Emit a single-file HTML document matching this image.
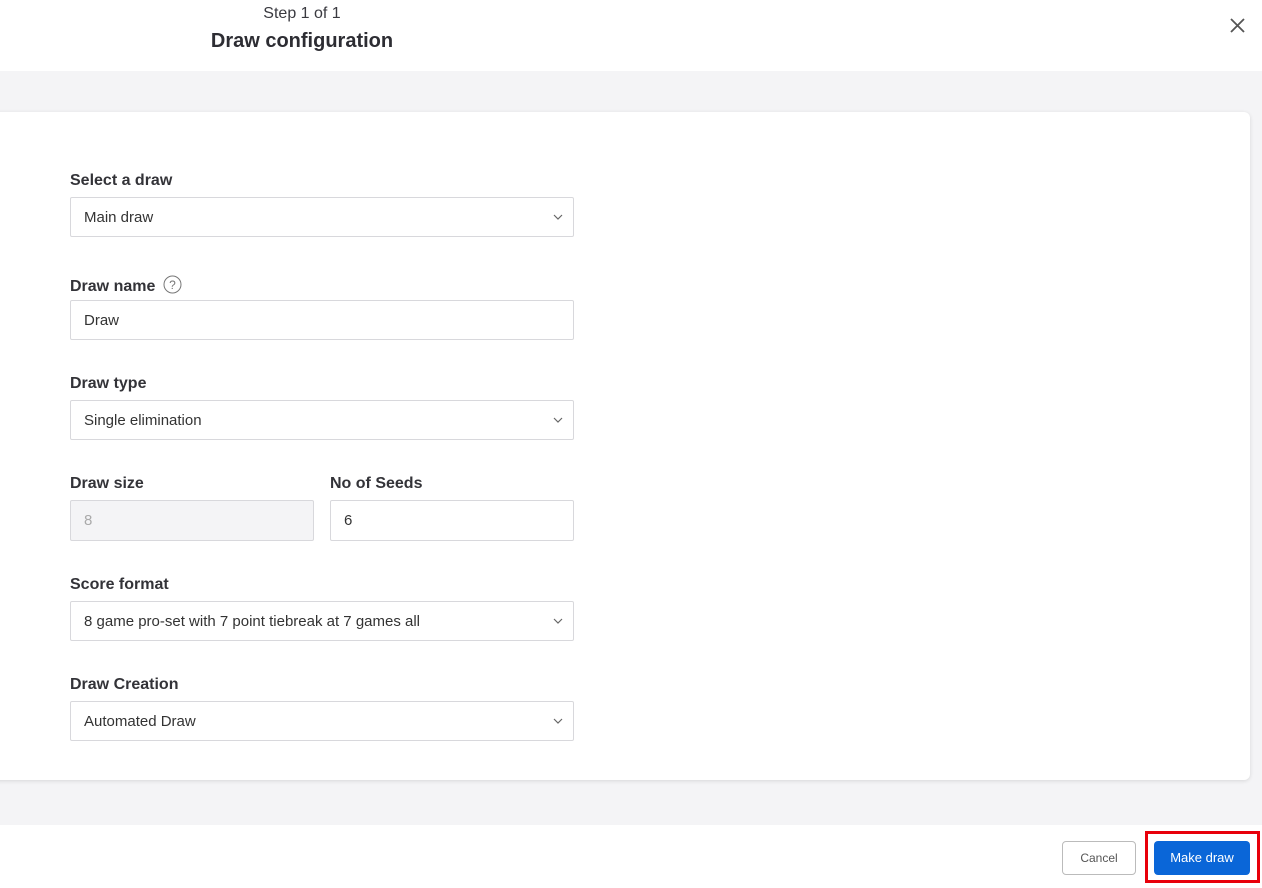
<!DOCTYPE html>
<html><head><style>
*{box-sizing:border-box;margin:0;padding:0}
body{width:1262px;height:888px;overflow:hidden;background:#f4f4f6;font-family:"Liberation Sans",sans-serif;position:relative;color:#2d2d33}
.hdr{position:absolute;left:0;top:0;width:1262px;height:71px;background:#fff}
.step{position:absolute;left:0;width:604px;top:5px;text-align:center;font-size:16px;color:#3a3a40}
.title{position:absolute;left:0;width:604px;top:30px;text-align:center;font-size:20px;font-weight:bold;color:#2d2d33}
.card{position:absolute;left:-10px;top:112px;width:1260px;height:668px;background:#fff;border-radius:6px;box-shadow:0 1px 4px rgba(0,0,0,.12)}
.lbl{position:absolute;font-size:16px;font-weight:bold;color:#333338}
.box{position:absolute;height:40px;border:1px solid #d8d8dc;border-radius:2px;background:#fff;font-size:15px;padding-left:13px;line-height:40px;color:#333}
.chev{position:absolute;right:10px;top:15px}
.ftr{position:absolute;left:0;top:825px;width:1262px;height:63px;background:#fff}
.cancel{position:absolute;left:1062px;top:841px;width:74px;height:34px;border:1px solid #bbb;border-radius:4px;font-size:12px;color:#555;text-align:center;line-height:32px;background:#fff}
.make{position:absolute;left:1154px;top:841px;width:96px;height:34px;border-radius:4px;background:#0a66d8;color:#fff;font-size:13px;text-align:center;line-height:34px}
.red{position:absolute;left:1145px;top:831px;width:115px;height:52px;border:3px solid #e8000b}
</style></head><body>
<div class="hdr"><div class="step">Step 1 of 1</div><div class="title">Draw configuration</div>
<svg style="position:absolute;left:1230px;top:18px" width="15" height="15" viewBox="0 0 15 15"><path d="M1 1L14 14M14 1L1 14" stroke="#555" stroke-width="1.8"/></svg></div>
<div class="card"></div>
<div class="lbl" style="left:70px;top:172px">Select a draw</div>
<div class="box" style="left:70px;top:197px;width:504px">Main draw<svg class="chev" width="10" height="8" viewBox="0 0 10 8"><path d="M1 2l4 4 4-4" stroke="#666" fill="none" stroke-width="1.2"/></svg></div>
<div class="lbl" style="left:70px;top:275px">Draw name <svg style="vertical-align:-3px;margin-left:3px" width="19" height="19" viewBox="0 0 19 19"><circle cx="9.5" cy="9.5" r="8.5" fill="none" stroke="#777" stroke-width="1"/><text x="9.5" y="14" font-size="12" text-anchor="middle" fill="#777" font-family="Liberation Sans" font-weight="normal">?</text></svg></div>
<div class="box" style="left:70px;top:300px;width:504px">Draw</div>
<div class="lbl" style="left:70px;top:375px">Draw type</div>
<div class="box" style="left:70px;top:400px;width:504px">Single elimination<svg class="chev" width="10" height="8" viewBox="0 0 10 8"><path d="M1 2l4 4 4-4" stroke="#666" fill="none" stroke-width="1.2"/></svg></div>
<div class="lbl" style="left:70px;top:475px">Draw size</div>
<div class="box" style="left:70px;top:500px;width:244px;height:41px;background:#f4f4f6;color:#aaa">8</div>
<div class="lbl" style="left:330px;top:475px">No of Seeds</div>
<div class="box" style="left:330px;top:500px;width:244px;height:41px">6</div>
<div class="lbl" style="left:70px;top:576px">Score format</div>
<div class="box" style="left:70px;top:601px;width:504px">8 game pro-set with 7 point tiebreak at 7 games all<svg class="chev" width="10" height="8" viewBox="0 0 10 8"><path d="M1 2l4 4 4-4" stroke="#666" fill="none" stroke-width="1.2"/></svg></div>
<div class="lbl" style="left:70px;top:676px">Draw Creation</div>
<div class="box" style="left:70px;top:701px;width:504px">Automated Draw<svg class="chev" width="10" height="8" viewBox="0 0 10 8"><path d="M1 2l4 4 4-4" stroke="#666" fill="none" stroke-width="1.2"/></svg></div>
<div class="ftr"></div>
<div class="cancel">Cancel</div>
<div class="make">Make draw</div>
<div class="red"></div>
</body></html>
